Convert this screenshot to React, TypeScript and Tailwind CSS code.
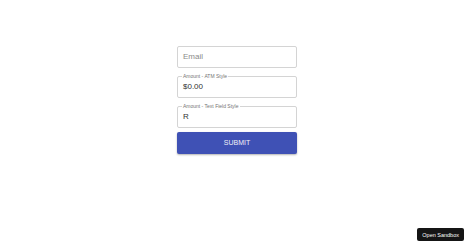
import React from "react"

function Field({ label, value, placeholder }: { label?: string; value?: string; placeholder?: string }) {
  return (
    <div className="relative h-[22px] w-full rounded-[2px] border border-[#d4d4d4]">
      {label && (
        <span className="absolute -top-[4px] left-[4px] bg-white px-[1px] text-[5px] leading-[6px] text-[#757575]">
          {label}
        </span>
      )}
      <div className="flex h-full items-center px-[5px] text-[8px]">
        {value ? <span className="text-[#333]">{value}</span> : <span className="text-[#8a8a8a]">{placeholder}</span>}
      </div>
    </div>
  )
}

export default function App() {
  return (
    <div className="relative h-[248px] w-[474px] bg-white font-['Liberation_Sans',Arial,sans-serif]">
      <div className="flex justify-center pt-[46px]">
        <div className="flex w-[120px] flex-col">
          <Field placeholder="Email" />
          <div className="mt-[8px]">
            <Field label="Amount - ATM Style" value="$0.00" />
          </div>
          <div className="mt-[8px]">
            <Field label="Amount - Text Field Style" value="R" />
          </div>
          <button className="mt-[4px] h-[22px] w-full rounded-[2px] bg-[#3f51b5] text-[7px] font-normal uppercase text-[#f0f0f8] shadow-[0_1px_2px_rgba(0,0,0,0.3)]">
            Submit
          </button>
        </div>
      </div>
      <div className="absolute bottom-[7px] right-[10px] rounded-[2px] bg-[#151515] px-[5px] py-[3.5px] text-[5.5px] leading-[6px] text-white">
        Open Sandbox
      </div>
    </div>
  )
}
